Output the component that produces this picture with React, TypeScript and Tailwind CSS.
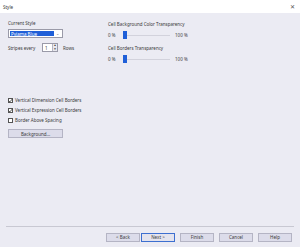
import React from "react";

const font = { fontFamily: '"Segoe UI", "Noto Sans", "Liberation Sans", sans-serif' };

function Slider({ label }: { label: string }) {
  return (
    <div className="flex flex-col">
      <div className="h-[6px] leading-[6px]">{label}</div>
      <div className="flex items-center h-[10px] mt-[3px]">
        <span className="w-[15px]">0 %</span>
        <div className="relative w-[47px] h-[10px] flex items-center">
          <div className="w-full h-[1px] bg-[#d2d2dc]" />
          <div className="absolute left-0 top-[1px] w-[4px] h-[8px] bg-[#1f5fd8]" />
        </div>
        <span className="ml-[5px]">100 %</span>
      </div>
    </div>
  );
}

function Check({ label, checked }: { label: string; checked: boolean }) {
  return (
    <div className="flex items-center h-[10px] gap-[2px]">
      <div className="w-[5px] h-[5px] border border-[#555] bg-white flex items-center justify-center">
        {checked ? (
          <svg width="5" height="5" viewBox="0 0 5 5" className="shrink-0">
            <path d="M0.6 2.6 L1.9 3.9 L4.4 0.9" fill="none" stroke="#333" strokeWidth="0.8" />
          </svg>
        ) : null}
      </div>
      <span>{label}</span>
    </div>
  );
}

function Btn({ label, primary }: { label: string; primary?: boolean }) {
  return (
    <div
      className={`w-[34px] h-[9px] flex items-center justify-center border ${
        primary ? "border-[#3d6fd0] bg-[#e3e3ee]" : "border-[#b4b4c4] bg-[#dcdcea]"
      }`}
    >
      {label}
    </div>
  );
}

export default function App() {
  return (
    <div
      className="w-[300px] h-[247px] flex flex-col bg-[#ebebf3] text-[#3a3a3a] text-[4.5px] leading-[6px] overflow-hidden"
      style={font}
    >
      <div className="h-[13px] bg-white flex items-center justify-between px-[3px] shrink-0">
        <span>Style</span>
        <span className="text-[6px] mr-[2px] text-[#555]">✕</span>
      </div>
      <div className="flex-1 flex flex-col px-[8px]">
        <div className="flex pt-[7px]">
          <div className="w-[100px] flex flex-col">
            <div className="h-[6px]">Current Style</div>
            <div className="mt-[3px] w-[55px] h-[9px] bg-white border border-[#9a9aa8] flex items-center p-[1px]">
              <div className="flex-1 h-full bg-[#1f5fd8] text-white flex items-center pl-[1px]">Pyjama Blue</div>
              <div className="w-[7px] text-center text-[4px] text-[#666]">⌄</div>
            </div>
            <div className="flex items-center mt-[5px] h-[9px]">
              <span className="w-[34px]">Stripes every</span>
              <div className="w-[16px] h-[9px] bg-white border border-[#9a9aa8] flex items-center">
                <span className="flex-1 pl-[2px]">1</span>
                <div className="w-[5px] h-full border-l border-[#b4b4c4] flex flex-col text-[3px] leading-[3.5px] text-center bg-[#e8e8ee]">
                  <span>▲</span>
                  <span>▼</span>
                </div>
              </div>
              <span className="ml-[5px]">Rows</span>
            </div>
          </div>
          <div className="flex flex-col gap-[5px] pt-[1px]">
            <Slider label="Cell Background Color Transparency" />
            <Slider label="Cell Borders Transparency" />
          </div>
        </div>
        <div className="flex flex-col mt-[31px]">
          <Check label="Vertical Dimension Cell Borders" checked />
          <Check label="Vertical Expression Cell Borders" checked />
          <Check label="Border Above Spacing" checked={false} />
          <div className="mt-[4px] w-[55px] h-[9px] border border-[#b4b4c4] bg-[#dcdcea] flex items-center justify-center">
            Background...
          </div>
        </div>
        <div className="flex-1" />
        <div className="h-[1px] bg-[#c8c8d2] -mx-[2px]" />
        <div className="flex justify-end items-center h-[20px] gap-[5px]">
          <div className="flex gap-[1px]">
            <Btn label="< Back" />
            <Btn label="Next >" primary />
          </div>
          <Btn label="Finish" />
          <Btn label="Cancel" />
          <Btn label="Help" />
        </div>
      </div>
    </div>
  );
}
